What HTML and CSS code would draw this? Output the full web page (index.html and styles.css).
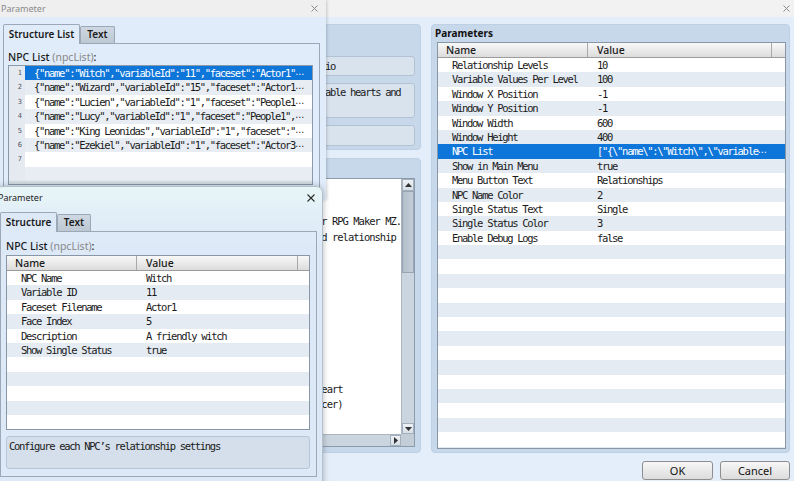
FILE: index.html
```html
<!DOCTYPE html>
<html>
<head>
<meta charset="utf-8">
<link rel="stylesheet" href="styles.css">
</head>
<body>
<div class="main">
  <div class="titlebar main-title">
    <span class="title-text"></span>
    <svg class="close" width="7" height="7" viewBox="0 0 7 7"><path d="M0.5 0.5L6.5 6.5M6.5 0.5L0.5 6.5" stroke="#8a8a8a" stroke-width="1"/></svg>
  </div>
  <div class="main-content">
    <div class="left-col">
      <div class="group info">
        <div class="field f1 mono">NPC Relationship System v1.0.0 - by HeartStudio</div>
        <div class="field f2 mono">Track NPC relationships with levels, configurable hearts and
menus.</div>
        <div class="field f3 mono"></div>
      </div>
      <div class="group help">
        <div class="textarea">
          <div class="ta-text mono">=== NPC Relationship System ===

Adds an NPC relationship system with hearts and levels for RPG Maker MZ.
Each NPC uses a variable to track its affection points and relationship
levels. Hearts fill up as the variable increases.

Plugin Commands:
  OpenRelationshipMenu - opens the relationship window

Parameters:
- Relationship Levels: number of hearts shown per NPC
- Variable Values Per Level: points needed per heart
- NPC List: name, variable, faceset and face of each NPC
- Single Status: shown when the NPC has no relationship heart
  (shown for NPCs at level 0, for example the village grocer)</div>
          <div class="vscroll">
            <div class="sbtn up"><svg width="7" height="4" viewBox="0 0 7 4"><path d="M0 4L3.5 0L7 4Z" fill="#333"/></svg></div>
            <div class="thumb"></div>
            <div class="track"></div>
            <div class="sbtn down"><svg width="7" height="4" viewBox="0 0 7 4"><path d="M0 0L3.5 4L7 0Z" fill="#333"/></svg></div>
          </div>
          <div class="hscroll">
            <div class="sbtn left"><svg width="4" height="7" viewBox="0 0 4 7"><path d="M4 0L0 3.5L4 7Z" fill="#333"/></svg></div>
            <div class="htrack"></div>
            <div class="sbtn right"><svg width="4" height="7" viewBox="0 0 4 7"><path d="M0 0L4 3.5L0 7Z" fill="#333"/></svg></div>
          </div>
          <div class="corner"></div>
        </div>
      </div>
    </div>
    <div class="group params">
      <div class="group-label">Parameters</div>
      <div class="table ptable">
        <div class="thead"><div class="th">Name</div><div class="th">Value</div><div class="th"></div></div>
        <div class="tbody mono">
          <div class="tr"><span>Relationship Levels</span><span>10</span></div>
          <div class="tr"><span>Variable Values Per Level</span><span>100</span></div>
          <div class="tr"><span>Window X Position</span><span>-1</span></div>
          <div class="tr"><span>Window Y Position</span><span>-1</span></div>
          <div class="tr"><span>Window Width</span><span>600</span></div>
          <div class="tr"><span>Window Height</span><span>400</span></div>
          <div class="tr sel"><span>NPC List</span><span>["{\"name\":\"Witch\",\"variable<i class="ell">⋯</i></span></div>
          <div class="tr"><span>Show in Main Menu</span><span>true</span></div>
          <div class="tr"><span>Menu Button Text</span><span>Relationships</span></div>
          <div class="tr"><span>NPC Name Color</span><span>2</span></div>
          <div class="tr"><span>Single Status Text</span><span>Single</span></div>
          <div class="tr"><span>Single Status Color</span><span>3</span></div>
          <div class="tr"><span>Enable Debug Logs</span><span>false</span></div>
          <div class="tr"></div><div class="tr"></div><div class="tr"></div><div class="tr"></div>
          <div class="tr"></div><div class="tr"></div><div class="tr"></div><div class="tr"></div>
          <div class="tr"></div><div class="tr"></div><div class="tr"></div><div class="tr"></div>
          <div class="tr"></div><div class="tr"></div><div class="tr"></div>
        </div>
      </div>
    </div>
  </div>
  <div class="buttons">
    <button class="btn ok">OK</button>
    <button class="btn cancel">Cancel</button>
  </div>
</div>

<div class="dialog dlg1">
  <div class="titlebar">
    <span class="title-text">Parameter</span>
    <svg class="close" width="7" height="7" viewBox="0 0 7 7"><path d="M0.5 0.5L6.5 6.5M6.5 0.5L0.5 6.5" stroke="#8a8a8a" stroke-width="1"/></svg>
  </div>
  <div class="dbody">
    <div class="tabs">
      <div class="tab active w-sl">Structure List</div>
      <div class="tab w-t1">Text</div>
    </div>
    <div class="panel">
      <div class="plabel">NPC List <span class="key">(npcList)</span>:</div>
      <div class="list mono">
        <div class="lrow sel"><span class="gut">1</span><span class="ltxt">{"name":"Witch","variableId":"11","faceset":"Actor1"<i class="ell">⋯</i></span></div>
        <div class="lrow"><span class="gut">2</span><span class="ltxt">{"name":"Wizard","variableId":"15","faceset":"Actor1<i class="ell">⋯</i></span></div>
        <div class="lrow"><span class="gut">3</span><span class="ltxt">{"name":"Lucien","variableId":"1","faceset":"People1<i class="ell">⋯</i></span></div>
        <div class="lrow"><span class="gut">4</span><span class="ltxt">{"name":"Lucy","variableId":"1","faceset":"People1",<i class="ell">⋯</i></span></div>
        <div class="lrow"><span class="gut">5</span><span class="ltxt">{"name":"King Leonidas","variableId":"1","faceset":"<i class="ell">⋯</i></span></div>
        <div class="lrow"><span class="gut">6</span><span class="ltxt">{"name":"Ezekiel","variableId":"1","faceset":"Actor3<i class="ell">⋯</i></span></div>
        <div class="lrow"><span class="gut">7</span><span class="ltxt"></span></div>
        <div class="lrow"><span class="gut"></span><span class="ltxt"></span></div>
      </div>
    </div>
  </div>
</div>

<div class="dialog dlg2">
  <div class="titlebar">
    <span class="title-text">Parameter</span>
    <svg class="close" width="8" height="8" viewBox="0 0 8 8"><path d="M0.5 0.5L7.5 7.5M7.5 0.5L0.5 7.5" stroke="#2a2a2a" stroke-width="1.1"/></svg>
  </div>
  <div class="dbody">
    <div class="tabs">
      <div class="tab active w-s">Structure</div>
      <div class="tab w-t2">Text</div>
    </div>
    <div class="panel">
      <div class="plabel">NPC List <span class="key">(npcList)</span>:</div>
      <div class="table dtable">
        <div class="thead"><div class="th">Name</div><div class="th">Value</div><div class="th"></div></div>
        <div class="tbody mono">
          <div class="tr"><span>NPC Name</span><span>Witch</span></div>
          <div class="tr"><span>Variable ID</span><span>11</span></div>
          <div class="tr"><span>Faceset Filename</span><span>Actor1</span></div>
          <div class="tr"><span>Face Index</span><span>5</span></div>
          <div class="tr"><span>Description</span><span>A friendly witch</span></div>
          <div class="tr"><span>Show Single Status</span><span>true</span></div>
          <div class="tr"></div><div class="tr"></div><div class="tr"></div>
          <div class="tr"></div><div class="tr"></div><div class="tr"></div>
        </div>
      </div>
      <div class="desc mono">Configure each NPC’s relationship settings</div>
    </div>
  </div>
</div>
</body>
</html>
```
FILE: styles.css
```css
* { box-sizing: border-box; margin: 0; padding: 0; }
html, body { width: 794px; height: 481px; overflow: hidden; }
body {
  position: relative;
  font-family: "Noto Sans", sans-serif;
  font-size: 11px;
  color: #111;
  background: #e3eefa;
}
.mono {
  font-family: "DejaVu Sans Mono", monospace;
  font-size: 10.5px;
  letter-spacing: -1.3px;
}
.ell {
  font-style: normal;
  font-family: "DejaVu Sans", sans-serif;
  letter-spacing: 0;
  font-size: 9px;
}

/* ---------- main window ---------- */
.main {
  width: 794px;
  height: 481px;
  display: flex;
  flex-direction: column;
  background: #e3eefa;
}
.titlebar {
  display: flex;
  align-items: center;
  justify-content: space-between;
  flex: none;
}
.main-title {
  height: 17px;
  background: #f2f2f2;
  padding: 0 4px 0 340px;
}
.main-content {
  display: flex;
  gap: 10px;
  padding: 7px 4px 0 8px;
  height: 436px;
}
.left-col {
  width: 413px;
  display: flex;
  flex-direction: column;
  gap: 8px;
}
.group {
  background: #c7d8eb;
  border: 1px solid #bdd0e4;
  border-radius: 4px;
}
.info {
  height: 126px;
  padding: 31px 5px 0 0;
  display: flex;
  flex-direction: column;
  align-items: flex-end;
  gap: 7px;
}
.field {
  width: 321px;
  background: #d9e3ee;
  border: 1px solid #b4c3d3;
  border-radius: 3px;
  padding: 0 4px;
  white-space: pre;
  overflow: hidden;
  color: #1a1a1a;
}
.f1 { height: 20px; line-height: 18px; }
.f2 { height: 35px; line-height: 15px; padding-top: 1px; }
.f3 { height: 21px; }

.help {
  flex: 1;
  padding: 19px 5px 5px 5px;
  display: flex;
}
.textarea {
  flex: 1;
  display: grid;
  grid-template-columns: 1fr 13px;
  grid-template-rows: 1fr 12px;
  border: 1px solid #8d9cac;
  background: #fff;
  overflow: hidden;
}
.ta-text {
  white-space: pre;
  overflow: hidden;
  padding: 5px 3px 0;
  line-height: 15.2px;
  letter-spacing: -1px;
  color: #1a1a1a;
}
.vscroll {
  display: flex;
  flex-direction: column;
  background: #cbd5df;
  border-left: 1px solid #a9b5c1;
}
.sbtn {
  display: flex;
  align-items: center;
  justify-content: center;
  background: linear-gradient(#eef2f6, #d6dee6);
  border: 1px solid #a3afbb;
  flex: none;
}
.vscroll .sbtn { height: 12px; }
.vscroll .down { height: 11px; }
.thumb {
  height: 82px;
  background: linear-gradient(90deg, #b3bfcb, #c3cdd7);
  border: 1px solid #97a4b1;
  flex: none;
}
.track { flex: 1; }
.hscroll {
  display: flex;
  background: #cbd5df;
  border-top: 1px solid #a9b5c1;
}
.hscroll .sbtn { width: 11px; }
.htrack { flex: 1; }
.corner { background: #c3cdd8; }

.params {
  flex: 1;
  padding: 0 3px 3px 5px;
  display: flex;
  flex-direction: column;
}
.group-label {
  height: 17px;
  line-height: 17px;
  font-weight: 700;
  font-size: 10px;
  margin-left: -2px;
  color: #111;
}

/* ---------- tables ---------- */
.table {
  border: 1px solid #8797a8;
  background: #fff;
  display: flex;
  flex-direction: column;
  overflow: hidden;
}
.ptable { flex: 1; }
.thead {
  display: grid;
  height: 15px;
  flex: none;
  background: linear-gradient(#f8f8f8, #dcdcdc);
  border-bottom: 1px solid #9c9c9c;
}
.ptable .thead { grid-template-columns: 150px 184px 1fr; }
.dtable .thead { grid-template-columns: 130px 161px 1fr; }
.th {
  border-right: 1px solid #a8a8a8;
  font-size: 10.5px;
  font-weight: 500;
  line-height: 14px;
  padding-left: 8px;
  color: #1a1a1a;
}
.th:nth-child(2) { padding-left: 9px; }
.th:last-child { border-right: none; }
.tbody { flex: 1; overflow: hidden; color: #1a1a1a; }
.tr {
  display: grid;
  height: 14.4px;
  line-height: 14.4px;
  white-space: pre;
}
.ptable .tr { grid-template-columns: 150px 1fr; }
.dtable .tr { grid-template-columns: 130px 1fr; }
.tr span:first-child { padding-left: 14px; }
.tr span:last-child { padding-left: 9px; overflow: hidden; }
.tr:nth-child(even) { background: #e4ebf3; }
.tr.sel { background: #0f76d9; color: #fff; }

/* ---------- buttons ---------- */
.buttons {
  display: flex;
  justify-content: flex-end;
  gap: 7px;
  padding: 8px 4px 0 0;
}
.btn {
  height: 19px;
  border: 1px solid #8e8e8e;
  border-radius: 3px;
  background: linear-gradient(#f7f7f7, #dcdcdc);
  font-family: "Noto Sans", sans-serif;
  font-size: 11px;
  color: #111;
}
.ok { width: 71px; }
.cancel { width: 70px; }

/* ---------- dialogs ---------- */
.dialog {
  position: absolute;
  display: flex;
  flex-direction: column;
}
.dlg1 {
  left: 0;
  top: 0;
  width: 326px;
  height: 200px;
  background: #e0ecf9;
  box-shadow: 1px 0 3px rgba(0, 0, 0, 0.18);
}
.dlg1 .titlebar {
  height: 17px;
  background: #efefef;
  color: #8a8a8a;
  font-size: 9px;
  padding: 0 8px 0 1px;
}
.dlg2 {
  left: -4px;
  top: 186px;
  width: 327px;
  height: 300px;
  border: 1px solid #b3c0cd;
  border-radius: 7px 7px 0 0;
  background: linear-gradient(#e9f6f6 0px, #e2eff8 24px, #dde9f7 60px);
  box-shadow: 0 0 6px rgba(0, 0, 0, 0.28);
}
.dlg2 .titlebar {
  height: 21px;
  color: #222;
  font-size: 9px;
  padding: 0 7px 0 1px;
}
.dbody {
  display: flex;
  flex-direction: column;
}
.dlg1 .dbody { padding: 7px 6px 0 3px; flex: 1; }
.dlg2 .dbody { padding: 4px 5px 0 3px; }
.tabs {
  display: flex;
  align-items: flex-end;
  height: 19px;
}
.tab {
  height: 17px;
  line-height: 15px;
  text-align: center;
  font-size: 10px;
  font-weight: 600;
  color: #1a1a1a;
  border: 1px solid #9aa8b7;
  border-bottom: none;
  background: linear-gradient(#cfd8e2, #bdc8d3);
  border-radius: 2px 2px 0 0;
}
.tab.active {
  height: 20px;
  line-height: 18px;
  margin-bottom: -1px;
  position: relative;
  z-index: 1;
  background: #e0ecf9;
}
.dlg2 .tab.active { background: #dde9f7; }
.w-sl { width: 77px; }
.w-t1 { width: 35px; }
.w-s { width: 57px; }
.w-t2 { width: 34px; }
.panel {
  border: 1px solid #9aa8b7;
  display: flex;
  flex-direction: column;
}
.dlg1 .panel { flex: 1; padding: 5px 6px 0 4px; }
.dlg2 .panel { padding: 6px 7px 7px 5px; }
.plabel {
  height: 16px;
  line-height: 16px;
  font-size: 10.5px;
  font-weight: 500;
  color: #1a1a1a;
}
.dlg2 .plabel { height: 17px; line-height: 17px; }
.key { color: #888; font-weight: 400; }
.list {
  width: 305px;
  height: 120px;
  border: 1px solid #8a9aab;
  background: #d5dde5;
  overflow: hidden;
}
.lrow {
  display: flex;
  height: 14.4px;
  line-height: 14.4px;
  background: #fff;
  color: #1a1a1a;
  white-space: pre;
}
.lrow:nth-child(even) { background: #e7edf3; }
.gut {
  width: 16px;
  flex: none;
  background: #e4eaf0;
  text-align: right;
  padding-right: 3px;
  font-size: 7px;
  letter-spacing: 0;
  color: #556;
}
.ltxt { flex: 1; padding-left: 9px; overflow: hidden; }
.lrow.sel .ltxt { background: #0f76d9; color: #fff; }
.dtable { height: 175px; width: 304px; }
.desc {
  margin-top: 6px;
  height: 33px;
  width: 304px;
  background: #d4dfeb;
  border: 1px solid #b7c6d6;
  border-radius: 3px;
  padding: 2px 2px;
  line-height: 15px;
  color: #1a1a1a;
}
```
